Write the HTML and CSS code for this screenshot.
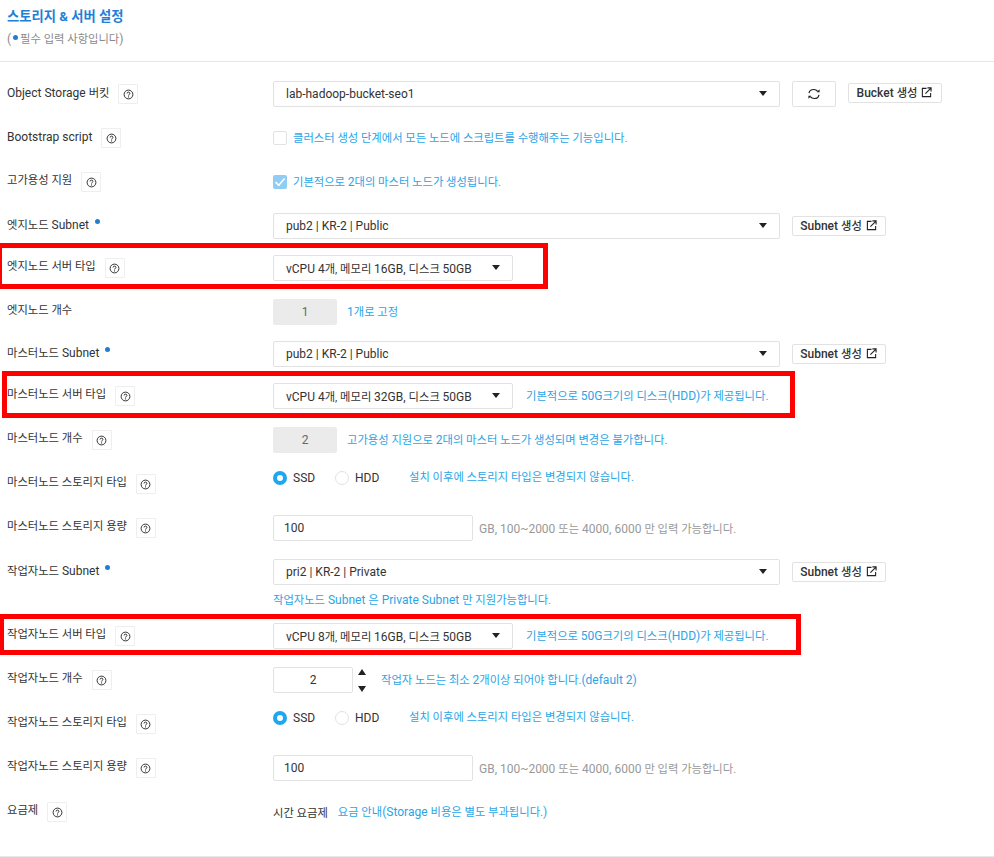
FILE: index.html
```html
<!DOCTYPE html>
<html lang="ko">
<head>
<meta charset="utf-8">
<title>스토리지 &amp; 서버 설정</title>
<link rel="stylesheet" href="styles.css">
</head>
<body>
<svg class="defs" width="0" height="0" aria-hidden="true">
  <symbol id="q" viewBox="0 0 12 12">
    <circle cx="6" cy="6" r="4.8" fill="none" stroke="#222" stroke-width="1"/>
    <path d="M4.4 4.9c0-1 .7-1.5 1.6-1.5s1.6.5 1.6 1.3c0 1.1-1.5 1.2-1.5 2.5" fill="none" stroke="#222" stroke-width="1"/>
    <circle cx="6.1" cy="8.6" r=".6" fill="#222"/>
  </symbol>
  <symbol id="ext" viewBox="0 0 12 12">
    <path d="M6 1.5H1.5v9h9V6.5" fill="none" stroke="#222" stroke-width="1.2"/>
    <path d="M4.8 7.2 10.6 1.4M7 1h4v4" fill="none" stroke="#222" stroke-width="1.2"/>
  </symbol>
</svg>
<main class="page">
  <header class="head">
    <h1 class="title">스토리지 &amp; 서버 설정</h1>
    <p class="sub">(<i class="dot dot-sub"></i><span class="k">필수 입력 사항입니다</span>)</p>
  </header>

  <div class="form">
    <div class="row">
      <div class="lab"><span class="txt">Object Storage <span class="k">버킷</span></span><span class="help"><svg class="qi"><use href="#q"/></svg></span></div>
      <div class="val">
        <div class="sel wide">lab-hadoop-bucket-seo1<b class="caret"></b></div>
        <button class="refresh"><svg viewBox="0 0 14 14" class="ri"><path d="M2 6.2C2.4 3.9 4.4 2.5 6.8 2.5c1.6 0 3 .7 3.9 1.9M12 7.8c-.4 2.3-2.4 3.7-4.8 3.7-1.6 0-3-.7-3.9-1.9" fill="none" stroke="#222" stroke-width="1.2"/><path d="M9.6 5.2h3V2.2zM4.4 8.8h-3v3z" fill="#222"/></svg></button>
        <button class="mk mk-b"><span class="mkt">Bucket <span class="k">생성</span></span><svg class="ei"><use href="#ext"/></svg></button>
      </div>
    </div>

    <div class="row">
      <div class="lab"><span class="txt">Bootstrap script</span><span class="help"><svg class="qi"><use href="#q"/></svg></span></div>
      <div class="val"><span class="chk"></span><span class="note k">클러스터 생성 단계에서 모든 노드에 스크립트를 수행해주는 기능입니다.</span></div>
    </div>

    <div class="row">
      <div class="lab"><span class="txt k">고가용성 지원</span><span class="help"><svg class="qi"><use href="#q"/></svg></span></div>
      <div class="val"><span class="chk on"><svg viewBox="0 0 14 14"><path d="M2.5 7l3.2 3.4L11.5 3.5" fill="none" stroke="#fff" stroke-width="1.6"/></svg></span><span class="note"><span class="k">기본적으로 </span>2<span class="k">대의 마스터 노드가 생성됩니다.</span></span></div>
    </div>

    <div class="row">
      <div class="lab"><span class="txt"><span class="k">엣지노드</span> Subnet</span><i class="dot"></i></div>
      <div class="val">
        <div class="sel wide">pub2 | KR-2 | Public<b class="caret"></b></div>
        <button class="mk"><span class="mkt">Subnet <span class="k">생성</span></span><svg class="ei"><use href="#ext"/></svg></button>
      </div>
    </div>

    <div class="row tight">
      <div class="lab"><span class="txt k">엣지노드 서버 타입</span><span class="help"><svg class="qi"><use href="#q"/></svg></span></div>
      <div class="val"><div class="sel short"><span>vCPU 4<span class="k">개, 메모리 </span>16GB, <span class="k">디스크 </span>50GB</span><b class="caret"></b></div></div>
      <span class="mark m1"></span>
    </div>

    <div class="row">
      <div class="lab"><span class="txt k">엣지노드 개수</span></div>
      <div class="val"><div class="fixed">1</div><span class="note">1<span class="k">개로 고정</span></span></div>
    </div>

    <div class="row tight">
      <div class="lab"><span class="txt"><span class="k">마스터노드</span> Subnet</span><i class="dot"></i></div>
      <div class="val">
        <div class="sel wide">pub2 | KR-2 | Public<b class="caret"></b></div>
        <button class="mk"><span class="mkt">Subnet <span class="k">생성</span></span><svg class="ei"><use href="#ext"/></svg></button>
      </div>
    </div>

    <div class="row tight">
      <div class="lab"><span class="txt k">마스터노드 서버 타입</span><span class="help"><svg class="qi"><use href="#q"/></svg></span></div>
      <div class="val"><div class="sel short"><span>vCPU 4<span class="k">개, 메모리 </span>32GB, <span class="k">디스크 </span>50GB</span><b class="caret"></b></div><span class="note gap-13"><span class="k">기본적으로 </span>50G<span class="k">크기의 디스크</span>(HDD)<span class="k">가 제공됩니다.</span></span></div>
      <span class="mark m2"></span>
    </div>

    <div class="row">
      <div class="lab"><span class="txt k">마스터노드 개수</span><span class="help"><svg class="qi"><use href="#q"/></svg></span></div>
      <div class="val"><div class="fixed">2</div><span class="note"><span class="k">고가용성 지원으로 </span>2<span class="k">대의 마스터 노드가 생성되며 변경은 불가합니다.</span></span></div>
    </div>

    <div class="row">
      <div class="lab"><span class="txt k">마스터노드 스토리지 타입</span><span class="help"><svg class="qi"><use href="#q"/></svg></span></div>
      <div class="val top">
        <span class="radio on"></span><span class="rtxt">SSD</span>
        <span class="radio"></span><span class="rtxt">HDD</span>
        <span class="note rnote k">설치 이후에 스토리지 타입은 변경되지 않습니다.</span>
      </div>
    </div>

    <div class="row">
      <div class="lab"><span class="txt k">마스터노드 스토리지 용량</span><span class="help"><svg class="qi"><use href="#q"/></svg></span></div>
      <div class="val"><div class="inp">100</div><span class="hint">GB, 100~2000 <span class="k">또는</span> 4000, 6000 <span class="k">만 입력 가능합니다.</span></span></div>
    </div>

    <div class="row">
      <div class="lab"><span class="txt"><span class="k">작업자노드</span> Subnet</span><i class="dot"></i></div>
      <div class="val">
        <div class="sel wide">pri2 | KR-2 | Private<b class="caret"></b></div>
        <button class="mk"><span class="mkt">Subnet <span class="k">생성</span></span><svg class="ei"><use href="#ext"/></svg></button>
      </div>
    </div>
    <p class="under"><span class="k">작업자노드</span> Subnet <span class="k">은</span> Private Subnet <span class="k">만 지원가능합니다.</span></p>

    <div class="row">
      <div class="lab"><span class="txt k">작업자노드 서버 타입</span><span class="help"><svg class="qi"><use href="#q"/></svg></span></div>
      <div class="val"><div class="sel short"><span>vCPU 8<span class="k">개, 메모리 </span>16GB, <span class="k">디스크 </span>50GB</span><b class="caret"></b></div><span class="note gap-13"><span class="k">기본적으로 </span>50G<span class="k">크기의 디스크</span>(HDD)<span class="k">가 제공됩니다.</span></span></div>
      <span class="mark m3"></span>
    </div>

    <div class="row">
      <div class="lab"><span class="txt k">작업자노드 개수</span><span class="help"><svg class="qi"><use href="#q"/></svg></span></div>
      <div class="val">
        <div class="num">2</div>
        <div class="spin"><b class="up"></b><b class="down"></b></div>
        <span class="note"><span class="k">작업자 노드는 최소 </span>2<span class="k">개이상 되어야 합니다.</span>(default 2)</span>
      </div>
    </div>

    <div class="row">
      <div class="lab"><span class="txt k">작업자노드 스토리지 타입</span><span class="help"><svg class="qi"><use href="#q"/></svg></span></div>
      <div class="val top">
        <span class="radio on"></span><span class="rtxt">SSD</span>
        <span class="radio"></span><span class="rtxt">HDD</span>
        <span class="note rnote k">설치 이후에 스토리지 타입은 변경되지 않습니다.</span>
      </div>
    </div>

    <div class="row">
      <div class="lab"><span class="txt k">작업자노드 스토리지 용량</span><span class="help"><svg class="qi"><use href="#q"/></svg></span></div>
      <div class="val"><div class="inp">100</div><span class="hint">GB, 100~2000 <span class="k">또는</span> 4000, 6000 <span class="k">만 입력 가능합니다.</span></span></div>
    </div>

    <div class="row">
      <div class="lab"><span class="txt k">요금제</span><span class="help"><svg class="qi"><use href="#q"/></svg></span></div>
      <div class="val"><span class="plain k">시간 요금제</span><span class="note"><span class="k">요금 안내</span>(Storage <span class="k">비용은 별도 부과됩니다.</span>)</span></div>
    </div>
  </div>
</main>
</body>
</html>
```

FILE: styles.css
```css
* { box-sizing: border-box; }
html, body { margin: 0; padding: 0; background: #fff; }
body {
  font-family: Roboto, "Noto Sans CJK KR", sans-serif;
  font-size: 12px;
  color: #333;
  overflow: hidden;
}
.k { font-size: 11.3px; }
.defs { position: absolute; }
.page { height: 857px; border-bottom: 1px solid #e8e8e8; }
.head { height: 62px; padding: 8px 7px 0; border-bottom: 1px solid #e5e5e5; }
.title { margin: 0; font-size: 13.3px; line-height: 18px; font-weight: 700; color: #1f7fd6; }
.sub { margin: 4px 0 0; line-height: 18px; color: #8a8a8a; }
.dot { display: inline-block; width: 5px; height: 5px; border-radius: 50%; background: #1f7fd6; }
.dot-sub { margin: 0 2px 5px 2px; vertical-align: middle; }
.form { padding-top: 19px; }
.row { position: relative; display: flex; align-items: center; height: 26px; margin-bottom: 18px; padding-left: 7px; }
.row:has(+ .tight) { margin-bottom: 16px; }
.row:has(+ .under) { margin-bottom: 7px; }
.lab { display: flex; align-items: center; width: 266px; flex: none; height: 26px; }
.txt { margin-bottom: 2px; line-height: 18px; color: #333; white-space: nowrap; }
.lab > .dot { margin: 0 0 9px 6px; }
.help { display: flex; align-items: center; justify-content: center; width: 20px; height: 20px; margin-left: 9px; border: 1px solid #eee; border-radius: 1px; background: #fff; }
.qi { width: 11px; height: 11px; }
.val { display: flex; align-items: center; height: 26px; }
.val.top { height: 26px; align-items: flex-start; padding-top: 0; }
.sel { position: relative; display: flex; align-items: center; height: 26px; padding-left: 12px; border: 1px solid #e2e2e2; border-radius: 2px; background: #fff; color: #333; white-space: nowrap; }
.wide { width: 507px; }
.short { width: 240px; }
.caret { position: absolute; right: 12px; top: 9px; width: 0; height: 0; border-left: 4px solid transparent; border-right: 4px solid transparent; border-top: 5px solid #222; }
.refresh { display: flex; align-items: center; justify-content: center; width: 44px; height: 26px; margin: 0 12px; padding: 0; border: 1px solid #e2e2e2; border-radius: 2px; background: #fff; }
.ri { width: 14px; height: 14px; }
.mk { display: flex; align-items: center; justify-content: center; gap: 4px; width: 94px; height: 20px; margin-left: 12px; padding: 0 1px 0 0; border: 1px solid #e2e2e2; border-radius: 2px; background: #fff; font: 500 12px Roboto, "Noto Sans CJK KR", sans-serif; color: #333; white-space: nowrap; }
.mk-b { margin: 0 0 2px; }
.mkt { line-height: 14px; }
.ei { width: 11px; height: 11px; margin-bottom: 2px; }
.chk { display: block; width: 14px; height: 14px; border: 1px solid #e2e2e2; border-radius: 2px; background: #fff; margin-right: 6px; }
.chk svg { display: block; width: 100%; height: 100%; }
.chk.on { border: 0; background: #8fcdf4; }
.note { margin: 0 0 2px 10px; color: #29a5e6; white-space: nowrap; }
.chk + .note { margin-left: 0; }
.gap-13 { margin-left: 13px; }
.fixed { display: flex; align-items: center; justify-content: center; width: 64px; height: 26px; border-radius: 2px; background: #ebebeb; color: #666; }
.radio { display: block; width: 14px; height: 14px; margin-top: 0; border: 1px solid #e2e2e2; border-radius: 50%; background: #fff; }
.radio.on { border: 4px solid #1ba8ee; }
.rtxt { width: 42px; margin-left: 6px; line-height: 14px; color: #333; }
.rnote { margin: 0 0 0 12px; line-height: 14px; }
.inp { display: flex; align-items: center; width: 200px; height: 26px; padding-left: 10px; border: 1px solid #e2e2e2; border-radius: 2px; color: #333; }
.hint { margin-left: 6px; color: #999; white-space: nowrap; }
.under { height: 18px; margin: 0 0 13px; padding-left: 273px; line-height: 16px; color: #29a5e6; }
.num { display: flex; align-items: center; justify-content: center; width: 80px; height: 26px; border: 1px solid #e2e2e2; border-radius: 2px; color: #333; }
.spin { display: flex; flex-direction: column; justify-content: space-between; width: 18px; height: 26px; padding: 2px 0 1px 5px; }
.up { width: 0; height: 0; border-left: 4.5px solid transparent; border-right: 4.5px solid transparent; border-bottom: 6px solid #222; }
.down { width: 0; height: 0; border-left: 4.5px solid transparent; border-right: 4.5px solid transparent; border-top: 6px solid #222; }
.spin + .note { margin-left: 10px; }
.plain { color: #333; }
.mark { position: absolute; border: 5px solid #f00; pointer-events: none; }
.m1 { left: -3px; top: -12px; width: 551px; height: 46px; }
.m2 { left: 2px; top: -12px; width: 793px; height: 47px; }
.m3 { left: -1px; top: -9px; width: 802px; height: 41px; }
```
